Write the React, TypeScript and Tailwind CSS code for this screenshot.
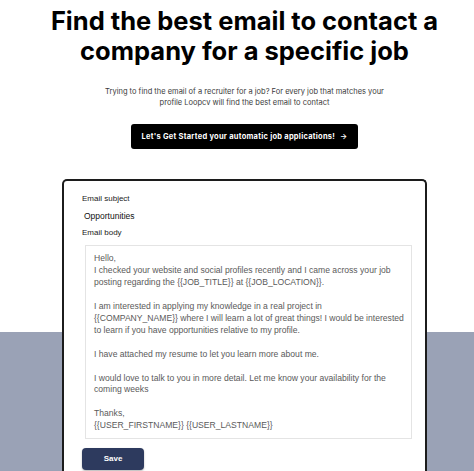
import React from 'react';

const body = `Hello,
I checked your website and social profiles recently and I came across your job posting regarding the {{JOB_TITLE}} at {{JOB_LOCATION}}.

I am interested in applying my knowledge in a real project in {{COMPANY_NAME}} where I will learn a lot of great things! I would be interested to learn if you have opportunities relative to my profile.

I have attached my resume to let you learn more about me.

I would love to talk to you in more detail. Let me know your availability for the coming weeks

Thanks,
{{USER_FIRSTNAME}} {{USER_LASTNAME}}`;

const App = () => {
  return (
    <div className="min-h-[471px] bg-white font-['Inter',sans-serif] text-black">
      <div className="flex flex-col items-center pl-[15px] pt-[6px]">
        <h1 className="text-center text-[25.5px] font-bold leading-[30px]">
          Find the best email to contact a
          <br />
          company for a specific job
        </h1>
        <p className="mt-[20px] w-[290px] text-center text-[7.5px] leading-[11px] text-[#3a3a3a]">
          Trying to find the email of a recruiter for a job? For every job that matches your profile Loopcv will find the best email to contact
        </p>
        <button className="mt-[16px] flex h-[25px] items-center rounded-[3px] bg-black px-[11px] text-[7.5px] font-bold tracking-[0.25px] text-white">
          Let's Get Started your automatic job applications! <span className="ml-[5px]">→</span>
        </button>
      </div>

      <div className="mt-[30px] bg-[linear-gradient(to_bottom,white_153px,#9aa2b6_153px)] pl-[15px]">
        <div className="mx-auto w-[365px] rounded-t-[5px] border-2 border-b-0 border-[#1c1c1c] bg-white pb-[3px] pl-[18px] pr-[13px] pt-[13px] font-['Liberation_Sans',sans-serif]">
          <div className="text-[8px] leading-[10px] text-[#222]">Email subject</div>
          <div className="mt-[7px] pl-[2px] text-[8.5px] leading-[10px] text-[#111]">Opportunities</div>
          <div className="mt-[7px] text-[8px] leading-[10px] text-[#222]">Email body</div>
          <div className="ml-[3px] mt-[7px] whitespace-pre-wrap border border-[#e4e4e4] bg-white pb-[6px] pl-[8px] pr-[6px] pt-[7px] text-[8.6px] leading-[11.95px] text-[#5a5a5a]">
            {body}
          </div>
          <button className="mt-[9px] h-[22px] w-[62px] rounded-[4px] bg-[#2d3a5e] text-[8px] font-bold text-white shadow-[0_1px_2px_rgba(0,0,0,0.3)]">
            Save
          </button>
        </div>
      </div>
    </div>
  );
};

export default App;
